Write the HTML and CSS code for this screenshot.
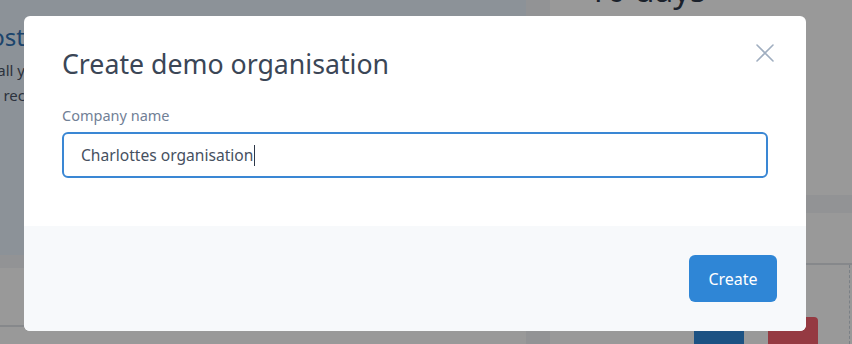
FILE: index.html
```html
<!DOCTYPE html>
<html lang="en">
<head>
<meta charset="utf-8">
<title>Create demo organisation</title>
<link rel="stylesheet" href="styles.css">
</head>
<body>
<div class="dashboard">
  <div class="col-left">
    <div class="card card-intro">
      <div class="intro-line intro-title"><span>Welcome to Boost</span></div>
      <div class="intro-line intro-text"><span>Here you can see all&nbsp;y</span></div>
      <div class="intro-line intro-text"><span>and all rec</span></div>
    </div>
    <div class="card card-list">
      <div class="list-head"></div>
    </div>
  </div>
  <div class="col-right">
    <div class="card card-stat">
      <div class="stat-value">10 days</div>
    </div>
    <div class="card card-chart">
      <div class="chart-head"></div>
      <div class="chart-body">
        <div class="bar bar-blue"></div>
        <div class="bar bar-red"></div>
        <div class="chart-dash"></div>
      </div>
    </div>
  </div>
</div>

<div class="overlay"></div>

<div class="modal" role="dialog" aria-labelledby="modal-title">
  <div class="modal-body">
    <div class="modal-header">
      <h2 id="modal-title" class="modal-title">Create demo organisation</h2>
      <button class="close-btn" aria-label="Close">
        <svg width="18" height="18" viewBox="0 0 18 18"><path d="M1 1 L17 17 M17 1 L1 17" stroke="#a0aec0" stroke-width="1.6" fill="none" stroke-linecap="round"/></svg>
      </button>
    </div>
    <label class="field-label" for="company">Company name</label>
    <div class="input-box">
      <span class="input-text">Charlottes organisation</span><span class="caret"></span>
    </div>
  </div>
  <div class="modal-footer">
    <button class="btn-primary">Create</button>
  </div>
</div>
</body>
</html>
```
FILE: styles.css
```css
* { box-sizing: border-box; }
html, body { margin: 0; padding: 0; }
body {
  width: 852px;
  height: 344px;
  overflow: hidden;
  background: #f4f6f8;
  font-family: "Noto Sans", "Open Sans", sans-serif;
  position: relative;
}

.dashboard {
  display: grid;
  grid-template-columns: 526px 1fr;
  column-gap: 24px;
}
.col-left, .col-right { display: flex; flex-direction: column; }
.col-left { gap: 13px; }
.col-right { gap: 18px; }

.card { background: #ffffff; }
.card-intro {
  background: #eaf3fd;
  height: 255px;
  padding-top: 21px;
}
.intro-line {
  width: 25px;
  display: flex;
  justify-content: flex-end;
  white-space: nowrap;
}
.intro-title {
  font-size: 24px;
  color: #2f72b5;
  line-height: 32px;
  margin-bottom: 5px;
}
.intro-text {
  font-size: 15px;
  line-height: 25px;
  color: #4a5568;
}
.card-list { height: 90px; }
.list-head { height: 59px; border-bottom: 2px solid #dfe3e8; }

.card-stat { height: 195px; overflow: hidden; }
.stat-value {
  font-size: 33px;
  line-height: 34px;
  color: #2d3748;
  margin: -27px 0 0 38px;
}
.card-chart { height: 140px; }
.chart-head { height: 52px; border-bottom: 2px solid #dfe3e8; }
.chart-body {
  display: flex;
  align-items: flex-end;
  height: 79px;
  padding-left: 144px;
}
.bar { border-radius: 4px 4px 0 0; }
.bar-blue { width: 50px; background: #2f89da; height: 26px; }
.bar-red { width: 50px; background: #f9616e; margin-left: 24px; height: 27px; }
.chart-dash {
  height: 100%;
  margin-left: 31px;
  border-left: 1px dashed #cbd5e0;
}

.overlay {
  position: absolute;
  inset: 0;
  background: rgba(0, 0, 0, 0.4);
}

.modal {
  position: absolute;
  left: 24px;
  top: 16px;
  width: 782px;
  height: 315px;
  background: #ffffff;
  border-radius: 6px;
  overflow: hidden;
  display: flex;
  flex-direction: column;
}
.modal-body {
  padding: 28px 40px 0 38px;
  height: 210px;
}
.modal-header {
  display: flex;
  justify-content: space-between;
  align-items: flex-start;
}
.modal-title {
  margin: 0;
  font-size: 26.7px;
  font-weight: 400;
  line-height: 40px;
  color: #3b4656;
}
.close-btn {
  border: 0;
  background: none;
  padding: 0;
  margin: 0 -8px 0 0;
  width: 18px;
  height: 18px;
  display: flex;
}
.field-label {
  display: block;
  margin-top: 21px;
  font-size: 14.5px;
  line-height: 20px;
  color: #718096;
}
.input-box {
  margin-top: 7px;
  width: 706px;
  height: 46px;
  border: 2px solid #3a87d4;
  border-radius: 6px;
  display: flex;
  align-items: center;
  padding-left: 17px;
}
.input-text {
  font-size: 15.6px;
  color: #46505f;
}
.caret {
  width: 1px;
  height: 21px;
  background: #2d3748;
  margin-left: 1px;
}
.modal-footer {
  flex: 1;
  background: #f7f9fb;
  display: flex;
  justify-content: flex-end;
  align-items: flex-start;
  padding: 29px 29px 0 0;
}
.btn-primary {
  width: 88px;
  height: 47px;
  border: 0;
  border-radius: 6px;
  background: #2f86d6;
  color: #ffffff;
  font-family: "Noto Sans", "Open Sans", sans-serif;
  font-size: 16px;
}
```
